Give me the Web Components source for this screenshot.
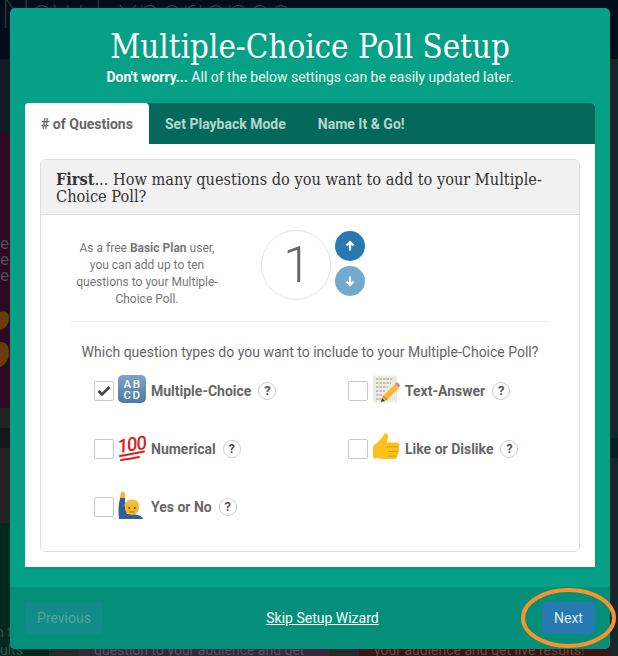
<!DOCTYPE html>
<html>
<head>
<meta charset="utf-8">
<title>Multiple-Choice Poll Setup</title>
<style>
  html, body { margin: 0; height: 656px; overflow: hidden; background: #020d1b; }
  body { font-family: Roboto, "Liberation Sans", sans-serif; position: relative; }
</style>
</head>
<body>
<page-backdrop></page-backdrop>

<poll-wizard>
  <wizard-tabs slot="tabs"></wizard-tabs>

  <question-counter slot="counter" count="1">
    As a free <b>Basic Plan</b> user, you can add up to ten questions to your Multiple-Choice Poll.
  </question-counter>

  <question-type checked label="Multiple-Choice">
    <svg slot="icon" width="28" height="28" viewBox="0 0 28 28">
      <defs><linearGradient id="abcd" x1="0" y1="0" x2="0" y2="1"><stop offset="0" stop-color="#7fa3c4"/><stop offset="1" stop-color="#4c7ba8"/></linearGradient></defs>
      <rect width="28" height="28" rx="5" fill="url(#abcd)"/>
      <text x="14.500" y="12.500" text-anchor="middle" font-family="Roboto" font-size="11.500" font-weight="500" letter-spacing="1.500" fill="#fff">AB</text>
      <text x="14.500" y="23.500" text-anchor="middle" font-family="Roboto" font-size="11.500" font-weight="500" letter-spacing="1.500" fill="#fff">CD</text>
    </svg>
  </question-type>
  <question-type label="Text-Answer">
    <svg slot="icon" width="28" height="28" viewBox="0 0 28 28">
      <rect x="1" y="0.500" width="24" height="27" fill="#ecebe4"/>
      <path d="M4 4h17M4 8h15M4 12h12M4 16h9M4 20h6M4 24h5" stroke="#95958f" stroke-width="1" stroke-dasharray="2.500 1"/>
      <path d="M9 27l2-6 12-12 4 4-12 12z" fill="#f6b93b"/>
      <path d="M11 21l4 4" stroke="#c9861a" stroke-width="1.200"/>
      <path d="M23 9l2-2 3 3-1 3z" fill="#e8807a"/>
      <path d="M9 27l1-4 3 3z" fill="#3d3d3d"/>
    </svg>
  </question-type>
  <question-type label="Numerical">
    <svg slot="icon" width="28" height="28" viewBox="0 0 28 28">
      <text x="14" y="18" text-anchor="middle" font-family="Roboto" font-style="italic" font-size="19" font-weight="500" letter-spacing="-1" fill="#d9201c" transform="rotate(-8 14 14)">100</text>
      <path d="M2 23Q14 21 26 18.500M3 27Q12 26 21 24" stroke="#d9201c" stroke-width="2" fill="none" stroke-linecap="round"/>
    </svg>
  </question-type>
  <question-type label="Like or Dislike">
    <svg slot="icon" width="28" height="28" viewBox="0 0 28 28">
      <path d="M1 15c0-3 3-4 5-6s5-5 6-8c1-1.500 4-1 4 2 0 3-1 5-1.500 6.500H25c3 0 3 4 1.500 4.800 1.500 1 1.300 3.700-.5 4.300 1 1.200.5 3.400-1 3.900.5 1.500-.5 3.500-2.500 3.500H11c-3 0-4-1-6-1.500C2 27.500 1 25 1 22z" fill="#fcc21b"/>
      <path d="M15 13.800h11.500M16 18.500h10M16.500 23h8" stroke="#d99a12" stroke-width="1.100" fill="none"/>
    </svg>
  </question-type>
  <question-type label="Yes or No">
    <svg slot="icon" width="28" height="28" viewBox="0 0 28 28">
      <path d="M1 28C0 20 .5 12 2.500 6L7 6.500C7 12 7.500 18 9 23c6 0 14 0 16 5z" fill="#2f5f96"/>
      <path d="M2.500 7C2 4 2.500 1 4.500 .5S7.500 3 7 7z" fill="#f6b62b"/>
      <circle cx="14" cy="17" r="7" fill="#f6b62b"/>
      <path d="M6.500 16c-.5-5 3-7.500 7.500-7.500s8 2.500 7.500 7.500c-1-2-1.500-3-2.500-3.500-3 1.500-7.500 1.500-10 .5-1 .5-2 1.500-2.500 3z" fill="#f0c14a"/>
      <circle cx="11.200" cy="17" r=".9" fill="#5b3a1a"/><circle cx="16.800" cy="17" r=".9" fill="#5b3a1a"/>
      <path d="M11.500 21h5" stroke="#a66a25" stroke-width="1"/>
    </svg>
  </question-type>
</poll-wizard>

<script>
const backdropTemplate = document.createElement('template');
backdropTemplate.innerHTML = `
  <style>
    :host { display: block; width: 618px; height: 656px; overflow: hidden; color: #3f4a50; font-size: 18px; }
    .head { height: 59px; background: #020d1b; overflow: hidden; }
    .head h1 { margin: -8px 0 0 1px; font: 100 42px/44px Roboto, sans-serif; color: #333e4a; white-space: nowrap; }
    .sub { height: 74px; background: linear-gradient(90deg, #0f1b24 300px, #17252d 610px); }
    .row { display: flex; }
    .first { height: 275px; background: #0f1b24; }
    .first .left { width: 42px; background: #2d0a24; overflow: hidden; text-align: right; }
    .first .diamond { width: 8px; height: 50px; margin-top: 70px; background: #431b1c; clip-path: polygon(100% 50%, 0 0, 0 100%); }
    .frag { font-size: 17px; line-height: 16px; color: #5c4754; width: 9px; padding-top: 102px; overflow: hidden; direction: rtl; white-space: nowrap; }
    .trophy { display: block; margin-top: 25px; }
    .first .right { margin-left: auto; width: 18px; background: #17252d; }
    .gray { height: 115px; background: #222324; display: flex; }
    .gray .main { flex: 1; }
    .gray i { display: block; height: 20px; margin-top: 20px; background: #16171b; }
    .gray .right { width: 18px; background: #17252d; }
    .gray .right i { margin-top: 30px; background: #0e1a22; }
    .last { height: 133px; background: #272a2c; font-size: 14px; line-height: 18px; }
    .c1 { width: 49px; background: #02291f; padding-top: 100px; color: #37524c; overflow: hidden; white-space: nowrap; text-indent: -4px; }
    .c2 { width: 250px; margin-left: 30px; background: #372838; padding: 118px 0 0 15px; box-sizing: border-box; white-space: nowrap; color: #5d5060; }
    .c3 { width: 251px; margin-left: 30px; background: #3a1515; padding: 118px 0 0 15px; box-sizing: border-box; white-space: nowrap; color: #6b4a44; }
    .c4 { flex: 1; background: #17252d; }
  </style>
  <div class="head"><h1>New Experience</h1></div>
  <div class="sub"></div>
  <div class="row first">
    <div class="left">
      <div class="frag">e.<br>ce<br>e</div>
      <svg class="trophy" width="10" height="60" viewBox="0 0 10 60"><path d="M0 4c5-2 10 0 9 8-1 6-5 9-9 10zM0 34c6-1 10 5 9 13-1 6-5 11-9 12z" fill="#6a3b0c"/></svg>
    </div>
    <div class="right"><div class="diamond"></div></div>
  </div>
  <div class="gray"><div class="main"><i></i></div><div class="right"><i></i></div></div>
  <div class="row last">
    <div class="c1">n t<br>ults</div>
    <div class="c2">question to your audience and get</div>
    <div class="c3">your audience and get live results!</div>
    <div class="c4"></div>
  </div>
`;
class PageBackdrop extends HTMLElement {
  constructor() {
    super();
    this.attachShadow({mode: 'open'});
    this.shadowRoot.appendChild(backdropTemplate.content.cloneNode(true));
  }
}
customElements.define('page-backdrop', PageBackdrop);

const wizardTemplate = document.createElement('template');
wizardTemplate.innerHTML = `
  <style>
    :host { display: flex; flex-direction: column; position: absolute; left: 10px; top: 8px; width: 600px; height: 641px; background: #06a086; border-radius: 5px; color: #fff; }
    header { text-align: center; height: 95px; flex: none; }
    h2 { margin: 0; padding-top: 19px; font: 400 32.800px/40px "DejaVu Serif", serif; font-stretch: condensed; }
    header p { margin: 0; font-size: 14px; line-height: 20px; color: #eef8f5; }
    header b { font-weight: 700; color: #fff; }
    .panel { margin: 0 15px; height: 464px; flex: none; border-radius: 4px 4px 0 0; background: #fff; box-shadow: 0 3px 0 #059a81; display: flex; flex-direction: column; }
    .card { margin: 15px; flex: 1; border: 1px solid #ddd; border-radius: 6px; color: #666; display: flex; flex-direction: column; }
    .card-head { height: 55px; box-sizing: border-box; padding: 11px 15px 0; background: #f1f1f1; border-bottom: 1px solid #ddd; border-radius: 6px 6px 0 0; font: 400 16.200px/17px "DejaVu Serif", serif; font-stretch: condensed; color: #333; }
    .card-body { flex: 1; padding: 0 30px; }
    .ask { margin: 0; padding-top: 22px; text-align: center; font-size: 14px; line-height: 17px; }
    .types { display: grid; grid-template-columns: 254px 1fr; grid-auto-rows: 58px; padding: 15px 0 0 23px; }
    footer { margin-top: 20px; flex: 1; background: #038f7a; border-radius: 0 0 5px 5px; display: flex; align-items: center; justify-content: space-between; padding: 0 15px; }
    footer a { color: #fff; font-size: 14px; text-decoration: underline; }
    button { border: 0; border-radius: 4px; height: 32px; font: 400 14px Roboto, sans-serif; padding: 0; }
    .prev { width: 78px; background: #128a88; color: #4ea79c; }
    .next { width: 53px; background: #2878b1; color: #dceaf2; }
    .ring { position: absolute; left: 511px; top: 580px; }
  </style>
  <header>
    <h2>Multiple-Choice Poll Setup</h2>
    <p><b>Don't worry...</b> All of the below settings can be easily updated later.</p>
  </header>
  <div class="panel">
    <slot name="tabs"></slot>
    <div class="card">
      <div class="card-head"><b>First</b>... How many questions do you want to add to your Multiple-Choice Poll?</div>
      <div class="card-body">
        <slot name="counter"></slot>
        <p class="ask">Which question types do you want to include to your Multiple-Choice Poll?</p>
        <div class="types"><slot></slot></div>
      </div>
    </div>
  </div>
  <footer>
    <button class="prev">Previous</button>
    <a href="#">Skip Setup Wizard</a>
    <button class="next">Next</button>
  </footer>
  <svg class="ring" width="95" height="60" viewBox="0 0 95 60"><ellipse cx="47.500" cy="30" rx="45.500" ry="28" fill="none" stroke="#f7932a" stroke-width="4"/></svg>
`;
class PollWizard extends HTMLElement {
  constructor() {
    super();
    this.attachShadow({mode: 'open'});
    this.shadowRoot.appendChild(wizardTemplate.content.cloneNode(true));
  }
}
customElements.define('poll-wizard', PollWizard);

const tabsTemplate = document.createElement('template');
tabsTemplate.innerHTML = `
  <style>
    :host { display: flex; height: 41px; background: #04695a; border-radius: 4px 4px 0 0; font-size: 14px; font-weight: 700; color: #b4d6cf; }
    span { line-height: 43px; padding: 0 16px; }
    .on { width: 124px; box-sizing: border-box; background: #fff; color: #666; border-radius: 4px 4px 0 0; text-align: center; padding: 0; }
  </style>
  <span class="on"># of Questions</span>
  <span>Set Playback Mode</span>
  <span>Name It &amp; Go!</span>
`;
class WizardTabs extends HTMLElement {
  constructor() {
    super();
    this.attachShadow({mode: 'open'});
    this.shadowRoot.appendChild(tabsTemplate.content.cloneNode(true));
  }
}
customElements.define('wizard-tabs', WizardTabs);

const counterTemplate = document.createElement('template');
counterTemplate.innerHTML = `
  <style>
    :host { display: flex; height: 106px; border-bottom: 1px solid #eee; font-size: 12px; line-height: 17px; color: #777; }
    .note { width: 142px; margin: 25px 0 0 5px; text-align: center; }
    .num { width: 66px; height: 68px; margin: 15px 0 0 43px; padding-left: 2px; border: 1px solid #e3e3e3; border-radius: 50%; text-align: center; font: 300 50px/68px Roboto, sans-serif; color: #666; }
    .arrows { display: flex; flex-direction: column; gap: 5px; margin: 16px 0 0 4px; }
    .arrows div { width: 30px; height: 30px; border-radius: 50%; background: #2878b1; display: flex; align-items: center; justify-content: center; }
    .arrows div + div { background: #73a9cf; }
  </style>
  <div class="note"><slot></slot></div>
  <div class="num"></div>
  <div class="arrows">
    <div><svg width="12" height="12" viewBox="0 0 12 12"><path d="M6 10.500V2M2.500 5.500L6 2l3.500 3.500" fill="none" stroke="#fff" stroke-width="2.200"/></svg></div>
    <div><svg width="12" height="12" viewBox="0 0 12 12"><path d="M6 1.500V10M2.500 6.500L6 10l3.500-3.500" fill="none" stroke="#fff" stroke-width="2.200"/></svg></div>
  </div>
`;
class QuestionCounter extends HTMLElement {
  constructor() {
    super();
    this.attachShadow({mode: 'open'});
    this.shadowRoot.appendChild(counterTemplate.content.cloneNode(true));
  }
  connectedCallback() {
    this.shadowRoot.querySelector('.num').textContent = this.getAttribute('count');
  }
}
customElements.define('question-counter', QuestionCounter);

const typeTemplate = document.createElement('template');
typeTemplate.innerHTML = `
  <style>
    :host { display: flex; align-items: center; height: 30px; font-size: 14px; font-weight: 700; color: #666; }
    .box { width: 18px; height: 18px; border: 1px solid #c8c8cc; border-radius: 2px; margin-right: 4px; display: flex; align-items: center; justify-content: center; background: #fff; }
    .icon { width: 28px; height: 28px; margin: 0 5px 5px 0; }
    .help { width: 16px; height: 16px; margin-left: 7px; border: 1px solid #ccc; border-radius: 50%; font-size: 13px; line-height: 16px; text-align: center; color: #555; }
  </style>
  <div class="box"></div>
  <div class="icon"><slot name="icon"></slot></div>
  <span class="label"></span>
  <div class="help">?</div>
`;
class QuestionType extends HTMLElement {
  constructor() {
    super();
    this.attachShadow({mode: 'open'});
    this.shadowRoot.appendChild(typeTemplate.content.cloneNode(true));
  }
  connectedCallback() {
    this.shadowRoot.querySelector('.label').textContent = this.getAttribute('label');
    if (this.hasAttribute('checked')) {
      this.shadowRoot.querySelector('.box').innerHTML =
        '<svg width="14" height="12" viewBox="0 0 14 12"><path d="M1.500 6l3.500 3.500L12.500 2" fill="none" stroke="#444" stroke-width="2.600"/></svg>';
    }
  }
}
customElements.define('question-type', QuestionType);
</script>
</body>
</html>
